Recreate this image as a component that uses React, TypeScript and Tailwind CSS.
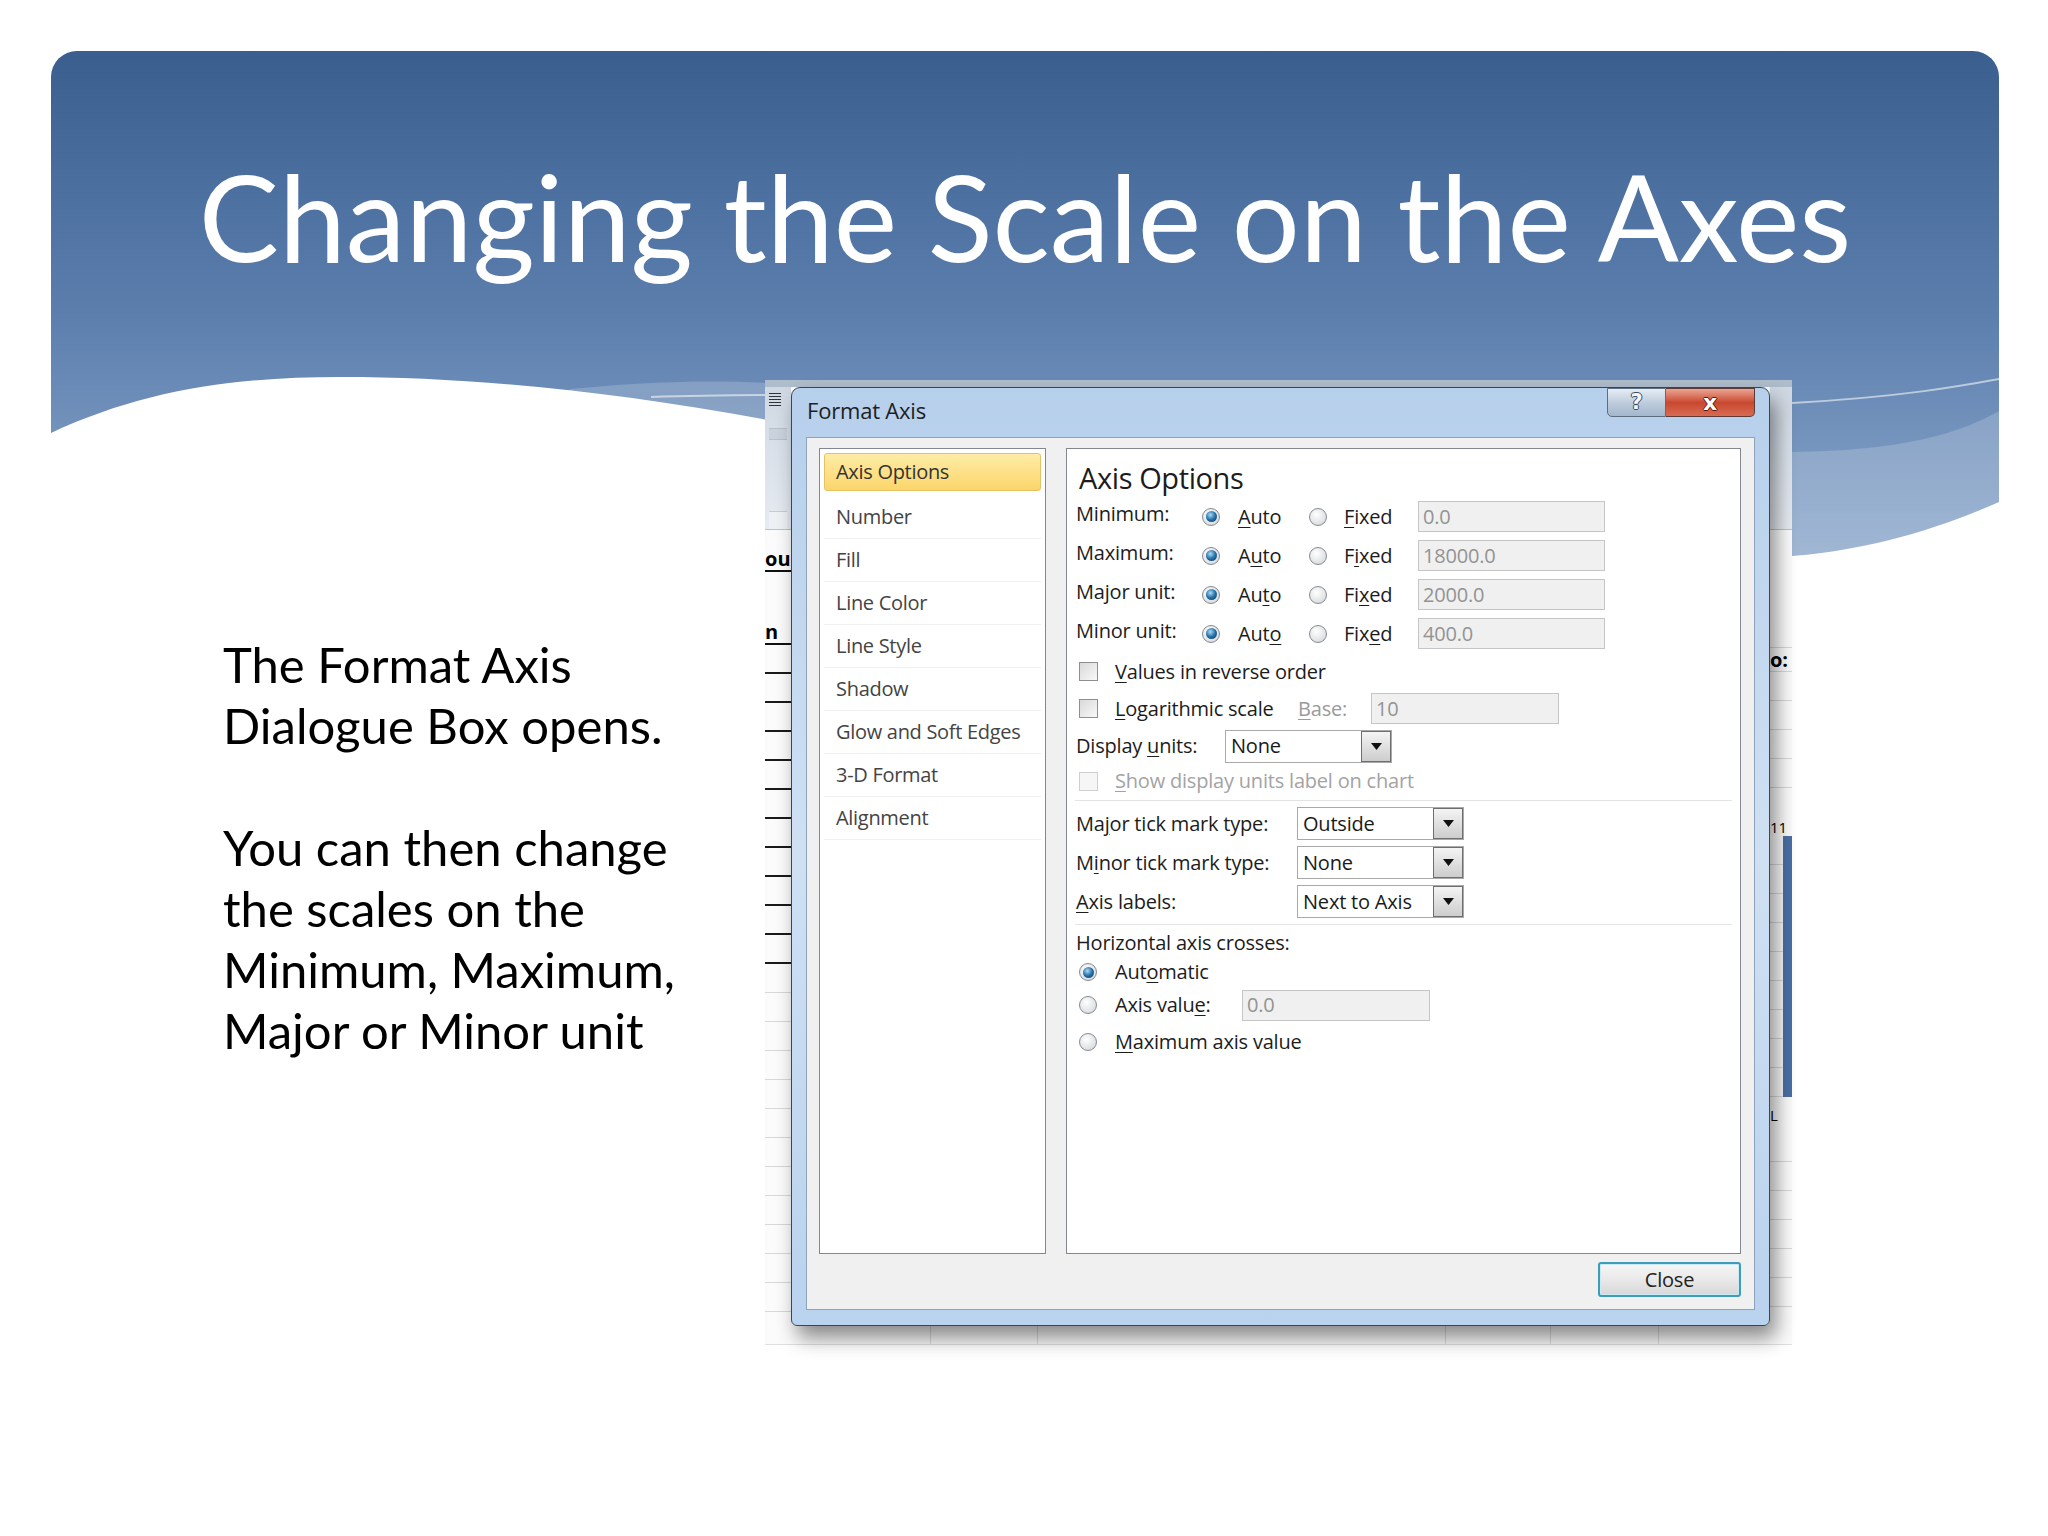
import React from "react";

const U = ({ children }: { children: React.ReactNode }) => (
  <span className="underline decoration-1 underline-offset-[3px]">{children}</span>
);

function Radio({ on = false }: { on?: boolean }) {
  return (
    <span className="flex size-[18px] shrink-0 items-center justify-center rounded-full border border-[#848a93] bg-[radial-gradient(circle_at_40%_35%,#ffffff,#cfd2d6)]">
      {on && (
        <span className="size-[11px] rounded-full bg-[radial-gradient(circle_at_40%_35%,#a9dcf6,#2470a8_50%,#0b3556)]" />
      )}
    </span>
  );
}

function Check({ disabled = false }: { disabled?: boolean }) {
  return (
    <span
      className={`size-[19px] shrink-0 border ${
        disabled
          ? "border-[#cfcfcf] bg-[#f6f6f6]"
          : "border-[#8e8f8f] bg-linear-to-br from-[#d9d9d9] to-[#f9f9f9]"
      }`}
    />
  );
}

function Field({ value, w }: { value: string; w: string }) {
  return (
    <span className={`flex h-[31px] ${w} items-center border border-[#c5c5c5] bg-[#f0f0f0] px-[4px] text-[#939393]`}>
      {value}
    </span>
  );
}

function Select({ value }: { value: string }) {
  return (
    <span className="flex h-[33px] w-[167px] shrink-0 border border-[#a9a9a9] bg-white">
      <span className="flex flex-1 items-center px-[5px] text-[#1a1a1a]">{value}</span>
      <span className="flex w-[30px] items-center justify-center border border-[#6f6f6f] bg-linear-to-b from-[#f4f4f4] to-[#cdcdcd]">
        <svg width="11" height="7" viewBox="0 0 11 7">
          <path d="M0 0h11L5.5 7z" fill="#111" />
        </svg>
      </span>
    </span>
  );
}

const axisRows = [
  { label: "Minimum:", auto: <><U>A</U>uto</>, fixed: <><U>F</U>ixed</>, value: "0.0" },
  { label: "Maximum:", auto: <>A<U>u</U>to</>, fixed: <>F<U>i</U>xed</>, value: "18000.0" },
  { label: "Major unit:", auto: <>Au<U>t</U>o</>, fixed: <>Fi<U>x</U>ed</>, value: "2000.0" },
  { label: "Minor unit:", auto: <>Aut<U>o</U></>, fixed: <>Fix<U>e</U>d</>, value: "400.0" },
];

const tickRows = [
  { label: <>Ma<U>j</U>or tick mark type:</>, value: "Outside" },
  { label: <>M<U>i</U>nor tick mark type:</>, value: "None" },
  { label: <><U>A</U>xis labels:</>, value: "Next to Axis" },
];

const navItems = [
  "Axis Options",
  "Number",
  "Fill",
  "Line Color",
  "Line Style",
  "Shadow",
  "Glow and Soft Edges",
  "3-D Format",
  "Alignment",
];

function Separator() {
  return (
    <div className="flex h-[7px] items-center px-[8px]">
      <div className="h-px w-full bg-[#e4e4e4]" />
    </div>
  );
}

function OptionsPanel() {
  return (
    <div className="flex h-[806px] w-[675px] flex-col border border-[#828790] bg-white pt-[11px] text-[#1c1c1c]">
      <div className="h-[37px] pl-[12px] text-[29px] leading-[36px] tracking-[-0.4px]">Axis Options</div>

      {axisRows.map((r) => (
        <div key={r.label} className="flex h-[39px] items-center pl-[9px]">
          <span className="w-[126px] pb-[6px]">{r.label}</span>
          <Radio on />
          <span className="ml-[18px] w-[71px]">{r.auto}</span>
          <Radio />
          <span className="ml-[17px] w-[74px]">{r.fixed}</span>
          <Field value={r.value} w="w-[187px]" />
        </div>
      ))}

      <div className="flex h-[37px] items-center pl-[12px]">
        <Check />
        <span className="ml-[17px]"><U>V</U>alues in reverse order</span>
      </div>
      <div className="flex h-[37px] items-center pl-[12px]">
        <Check />
        <span className="ml-[17px] w-[183px]"><U>L</U>ogarithmic scale</span>
        <span className="w-[73px] text-[#9a9a9a]"><U>B</U>ase:</span>
        <Field value="10" w="w-[188px]" />
      </div>
      <div className="flex h-[38px] items-center pl-[9px]">
        <span className="w-[149px]">Display <U>u</U>nits:</span>
        <Select value="None" />
      </div>
      <div className="flex h-[32px] items-center pl-[12px] text-[#a3a3a3]">
        <Check disabled />
        <span className="ml-[17px]"><U>S</U>how display units label on chart</span>
      </div>

      <Separator />

      {tickRows.map((r, i) => (
        <div key={i} className="flex h-[39px] items-center pl-[9px]">
          <span className="w-[221px]">{r.label}</span>
          <Select value={r.value} />
        </div>
      ))}

      <Separator />

      <div className="flex h-[30px] items-center pl-[9px]">Horizontal axis crosses:</div>
      <div className="flex h-[28px] items-center pl-[12px]">
        <Radio on />
        <span className="ml-[18px]">Aut<U>o</U>matic</span>
      </div>
      <div className="flex h-[38px] items-center pl-[12px]">
        <Radio />
        <span className="ml-[18px] w-[127px]">Axis valu<U>e</U>:</span>
        <Field value="0.0" w="w-[188px]" />
      </div>
      <div className="flex h-[36px] items-center pl-[12px]">
        <Radio />
        <span className="ml-[18px]"><U>M</U>aximum axis value</span>
      </div>
    </div>
  );
}

function NavPanel() {
  return (
    <div className="flex h-[806px] w-[227px] flex-col border border-[#828790] bg-white px-[4px] pt-[4px] text-[20px] tracking-[-0.3px] text-[#444]">
      {navItems.map((item, i) =>
        i === 0 ? (
          <div key={item} className="h-[43px]">
            <div className="flex h-[38px] items-center rounded-[3px] border border-[#e5c365] bg-linear-to-b from-[#fdeca6] via-[#fde189] to-[#fbd56a] pl-[11px] text-[#333]">
              {item}
            </div>
          </div>
        ) : (
          <div key={item} className="flex h-[43px] items-center border-b border-[#f0f0f0] pl-[12px]">
            {item}
          </div>
        )
      )}
    </div>
  );
}

function Dialog() {
  return (
    <div className="absolute left-[26px] top-[7px] flex h-[939px] w-[979px] flex-col rounded-t-[9px] rounded-b-[6px] border border-[#3b4654] bg-linear-to-b from-[#b6cfeb] via-[#cfe0f3] to-[#b9d2ee] shadow-[6px_12px_20px_rgba(0,0,0,0.45)]">
      <div className="flex h-[49px] items-start justify-between">
        <span className="flex h-[45px] items-center pl-[15px] text-[22px] text-[#1e1e1e]">Format Axis</span>
        <div className="mr-[14px] flex">
          <span className="flex h-[29px] w-[59px] items-center justify-center rounded-bl-[5px] border border-[#5d6d80] bg-linear-to-b from-[#e6edf5] via-[#bfcddd] to-[#a3b6cc] font-['DejaVu_Sans',sans-serif] text-[21px] leading-none font-bold text-[#f4f7fa] [text-shadow:1px_0_#3a4b60,-1px_0_#3a4b60,0_1px_#3a4b60,0_-1px_#3a4b60]">
            ?
          </span>
          <span className="flex h-[29px] w-[89px] items-center justify-center rounded-br-[5px] border border-l-0 border-[#5d3a35] bg-linear-to-b from-[#e9a594] via-[#c9472f] to-[#d86a52] font-['DejaVu_Sans',sans-serif] text-[22px] leading-none font-bold text-white [text-shadow:1px_0_#5a1a10,-1px_0_#5a1a10,0_1px_#5a1a10,0_-1px_#5a1a10]">
            x
          </span>
        </div>
      </div>
      <div className="mx-[14px] flex h-[873px] flex-col border border-[#8ea2ba] bg-[#f0f0f0]">
        <div className="flex gap-[20px] pl-[12px] pt-[10px]">
          <NavPanel />
          <OptionsPanel />
        </div>
        <div className="flex justify-end pr-[13px] pt-[8px]">
          <span className="flex h-[35px] w-[143px] items-center justify-center rounded-[3px] border-2 border-[#3f9cb8] bg-linear-to-b from-[#f6f6f6] via-[#e9e9e9] to-[#d8d8d8] text-[#222] shadow-[inset_0_0_0_1px_#c9eaf5]">
            Close
          </span>
        </div>
      </div>
    </div>
  );
}

function GridRows({ n }: { n: number }) {
  return (
    <>
      {Array.from({ length: n }).map((_, i) => (
        <div key={i} className="h-[29px] shrink-0 border-b border-[#d8d8d8]" />
      ))}
    </>
  );
}

function Screenshot() {
  return (
    <div className="relative h-[965px] w-[1027px] shrink-0 font-['Open_Sans',sans-serif] text-[20px] tracking-[-0.2px]">
      <div className="flex h-full flex-col overflow-hidden bg-[#fbfbfb]">
        <div className="h-[7px] bg-[#aebccc]" />
        <div className="flex flex-1 overflow-hidden">
          <div className="flex w-[26px] flex-col">
            <div className="flex h-[143px] shrink-0 flex-col border-b border-[#b9c3cf] bg-linear-to-b from-[#cfd8e3] to-[#e6ebf1] px-[4px] pt-[6px]">
              <div className="flex w-[12px] flex-col gap-[2px]">
                {[0, 1, 2, 3, 4].map((i) => (
                  <div key={i} className="h-[1px] bg-[#333]" />
                ))}
              </div>
              <div className="mt-[22px] h-[12px] border-y border-[#b7c0cb] bg-[#c9d2dd]" />
              <div className="mt-auto h-[18px] border-t border-[#c5ccd5] bg-[#eef1f4]" />
            </div>
            <div className="flex h-[42px] shrink-0 items-end">
              <span className="w-full border-b-2 border-[#111] text-[20px] leading-[22px] font-bold tracking-normal">ou</span>
            </div>
            <div className="flex h-[73px] shrink-0 items-end">
              <span className="w-full border-b-2 border-[#111] text-[20px] leading-[22px] font-bold tracking-normal">n</span>
            </div>
            {Array.from({ length: 11 }).map((_, i) => (
              <div key={i} className="h-[29px] shrink-0 border-b-2 border-[#1a1a1a]" />
            ))}
            <GridRows n={12} />
          </div>
          <div className="flex-1" />
          <div className="flex w-[22px] flex-col">
            <div className="h-[143px] shrink-0 border-b border-[#b9c3cf] bg-linear-to-b from-[#cfd8e3] to-[#e6ebf1]" />
            <div className="h-[118px] shrink-0 border-b border-[#d8d8d8]" />
            <div className="h-[24px] shrink-0 border-b border-[#d8d8d8] text-[20px] leading-[24px] font-bold">o:</div>
            <GridRows n={4} />
            <div className="flex h-[48px] shrink-0 items-end text-[15px] leading-[18px] tracking-normal">11</div>
            <div className="flex h-[261px] shrink-0 justify-end">
              <div className="flex-1">
                <GridRows n={9} />
              </div>
              <div className="w-[9px] bg-[#4a6fa5]" />
            </div>
            <div className="flex h-[36px] shrink-0 items-center text-[15px]">L</div>
            <GridRows n={6} />
          </div>
        </div>
        <div className="flex h-[19px] border-b border-[#e0e0e0]">
          <div className="w-[166px] border-r border-[#dcdcdc]" />
          <div className="w-[107px] border-r border-[#dcdcdc]" />
          <div className="w-[408px] border-r border-[#dcdcdc]" />
          <div className="w-[105px] border-r border-[#dcdcdc]" />
          <div className="w-[108px] border-r border-[#dcdcdc]" />
          <div className="flex-1" />
        </div>
      </div>
      <Dialog />
    </div>
  );
}

export default function App() {
  return (
    <div className="h-[1536px] w-[2048px] overflow-hidden bg-white pt-[51px] font-['Lato',sans-serif]">
      <header className="relative ml-[51px] mr-[49px] h-[520px] overflow-hidden rounded-t-[26px] bg-linear-to-b from-[#3a5f8f] via-[#5b7ead] to-[#8faacd]">
        <svg className="absolute inset-0" width="1948" height="520" viewBox="0 0 1948 520" preserveAspectRatio="none">
          <path
            d="M520,338 C640,326 720,330 780,338 C1100,365 1500,402 1741,401 C1850,400 1910,382 1948,360 L1948,520 L0,520 Z"
            fill="#ffffff"
            fillOpacity="0.18"
          />
          <path
            d="M600,346 C900,336 1500,366 1741,352 C1850,346 1910,335 1948,328"
            fill="none"
            stroke="#ffffff"
            strokeOpacity="0.55"
            strokeWidth="2"
          />
          <path
            d="M0,382 C90,340 180,326 289,326 C420,326 560,340 717,369 C1000,420 1500,520 1741,505 C1830,498 1900,472 1948,451 L1948,530 L0,530 Z"
            fill="#ffffff"
          />
        </svg>
        <h1 className="relative pt-[105px] text-center text-[120px] leading-none font-normal text-white">
          Changing the Scale on the Axes
        </h1>
      </header>
      <main className="-mt-[191px] flex">
        <div className="w-[765px] shrink-0 pl-[223px] pt-[254px] text-[49px] leading-[61px] text-black">
          The Format Axis
          <br />
          Dialogue Box opens.
          <br />
          <br />
          You can then change
          <br />
          the scales on the
          <br />
          Minimum, Maximum,
          <br />
          Major or Minor unit
        </div>
        <Screenshot />
      </main>
    </div>
  );
}
